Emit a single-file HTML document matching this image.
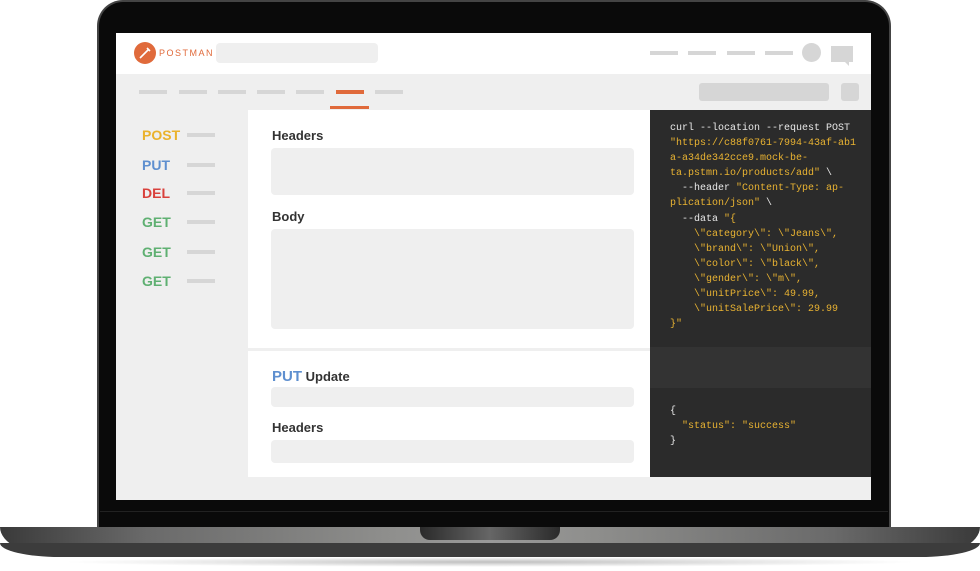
<!DOCTYPE html>
<html><head><style>
*{margin:0;padding:0;box-sizing:border-box}
body{width:980px;height:571px;background:#fff;position:relative;overflow:hidden;font-family:"Liberation Sans",sans-serif}
.a{position:absolute}
.g{background:#d6d6d6}
.box{background:#efefef;border-radius:4px;position:absolute}
.m{font-weight:bold;font-size:14px;position:absolute;left:142px}
.h{font-weight:bold;font-size:13px;color:#333;position:absolute;left:272px}
pre{font-family:"Liberation Mono",monospace;font-size:10px;line-height:15.1px;color:#e8e8e8}
.y{color:#e9b332}
</style></head><body>
<div class="a" style="left:97px;top:0;width:794px;height:530px;background:#0a0a0a;border-radius:26px 26px 0 0;border:2px solid #444;border-bottom:none"></div>
<div class="a" style="left:100px;top:511px;width:788px;height:1px;background:#222"></div>
<div class="a" style="left:116px;top:33px;width:755px;height:467px;background:#efefef;overflow:hidden">
 <div class="a" style="left:0;top:0;width:755px;height:41px;background:#fff"></div>
 <div class="a" style="left:18px;top:9px;width:22px;height:22px;border-radius:50%;background:#e06a3b"></div>
 <svg class="a" style="left:18px;top:9px" width="22" height="22"><path d="M6 16 L14 8 M13 6 l3 3" stroke="#fff" stroke-width="1.6" fill="none"/></svg>
 <div class="a" style="left:43px;top:15px;font-size:9px;letter-spacing:1.5px;color:#e06a3b">POSTMAN</div>
 <div class="a" style="left:100px;top:10px;width:162px;height:20px;background:#efefef;border-radius:4px"></div>
 <div class="a g" style="left:534px;top:18px;width:28px;height:4px"></div>
 <div class="a g" style="left:572px;top:18px;width:28px;height:4px"></div>
 <div class="a g" style="left:611px;top:18px;width:28px;height:4px"></div>
 <div class="a g" style="left:649px;top:18px;width:28px;height:4px"></div>
 <div class="a g" style="left:686px;top:10px;width:19px;height:19px;border-radius:50%"></div>
 <div class="a g" style="left:715px;top:13px;width:22px;height:16px"></div>
 <div class="a" style="left:729px;top:29px;border-left:4px solid transparent;border-top:4px solid #d6d6d6"></div>
 <div class="a g" style="left:23px;top:57px;width:28px;height:4px"></div>
 <div class="a g" style="left:63px;top:57px;width:28px;height:4px"></div>
 <div class="a g" style="left:102px;top:57px;width:28px;height:4px"></div>
 <div class="a g" style="left:141px;top:57px;width:28px;height:4px"></div>
 <div class="a g" style="left:180px;top:57px;width:28px;height:4px"></div>
 <div class="a" style="left:220px;top:57px;width:28px;height:4px;background:#e06a3b"></div>
 <div class="a g" style="left:259px;top:57px;width:28px;height:4px"></div>
 <div class="a" style="left:214px;top:73px;width:39px;height:3px;background:#e06a3b"></div>
 <div class="a g" style="left:583px;top:50px;width:130px;height:18px;border-radius:3px"></div>
 <div class="a g" style="left:725px;top:50px;width:18px;height:18px;border-radius:3px"></div>
 <div class="a" style="left:132px;top:77px;width:402px;height:238px;background:#fff"></div>
 <div class="a" style="left:132px;top:318px;width:402px;height:126px;background:#fff"></div>
 <div class="a" style="left:534px;top:77px;width:221px;height:367px;background:#2b2b2b"></div>
 <div class="a" style="left:534px;top:314px;width:221px;height:41px;background:#333"></div>
</div>
<div class="m" style="top:127px;color:#eab22c">POST</div>
<div class="m" style="top:157px;color:#5e8fcf">PUT</div>
<div class="m" style="top:185px;color:#d9413c">DEL</div>
<div class="m" style="top:214px;color:#5fb072">GET</div>
<div class="m" style="top:244px;color:#5fb072">GET</div>
<div class="m" style="top:273px;color:#5fb072">GET</div>
<div class="a g" style="left:187px;top:133px;width:28px;height:4px"></div>
<div class="a g" style="left:187px;top:163px;width:28px;height:4px"></div>
<div class="a g" style="left:187px;top:191px;width:28px;height:4px"></div>
<div class="a g" style="left:187px;top:220px;width:28px;height:4px"></div>
<div class="a g" style="left:187px;top:250px;width:28px;height:4px"></div>
<div class="a g" style="left:187px;top:279px;width:28px;height:4px"></div>
<div class="h" style="top:128px">Headers</div>
<div class="box" style="left:271px;top:148px;width:363px;height:47px"></div>
<div class="h" style="top:209px">Body</div>
<div class="box" style="left:271px;top:229px;width:363px;height:100px"></div>
<div class="h" style="top:368px"><span style="color:#5e8fcf;font-size:15px">PUT</span> Update</div>
<div class="box" style="left:271px;top:387px;width:363px;height:20px"></div>
<div class="h" style="top:420px">Headers</div>
<div class="box" style="left:271px;top:440px;width:363px;height:23px"></div>
<pre class="a" style="left:670px;top:121px">curl --location --request POST
<span class="y">"https://c88f0761-7994-43af-ab1
a-a34de342cce9.mock-be-
ta.pstmn.io/products/add"</span> \
  --header <span class="y">"Content-Type: ap-
plication/json"</span> \
  --data <span class="y">"{
    \"category\": \"Jeans\",
    \"brand\": \"Union\",
    \"color\": \"black\",
    \"gender\": \"m\",
    \"unitPrice\": 49.99,
    \"unitSalePrice\": 29.99
}"</span></pre>
<pre class="a" style="left:670px;top:404px">{
  <span class="y">"status": "success"</span>
}</pre>
<div class="a" style="left:0;top:527px;width:980px;height:30px;border-radius:0 0 60px 60px/0 0 30px 30px;background:linear-gradient(90deg,#3a3a3a,#6a6a6a 15%,#8f8f8d 40%,#999 50%,#8f8f8d 60%,#6a6a6a 85%,#3a3a3a)"></div>
<div class="a" style="left:0;top:543px;width:980px;height:14px;border-radius:0 0 60px 60px/0 0 14px 14px;background:#3c3c3c"></div>
<div class="a" style="left:420px;top:527px;width:140px;height:13px;border-radius:0 0 10px 10px;background:linear-gradient(90deg,#2a2a2a,#666 50%,#2a2a2a)"></div>
<div class="a" style="left:60px;top:557px;width:860px;height:10px;border-radius:50%;background:radial-gradient(ellipse at center,rgba(0,0,0,.25),rgba(0,0,0,0) 70%)"></div>
</body></html>
